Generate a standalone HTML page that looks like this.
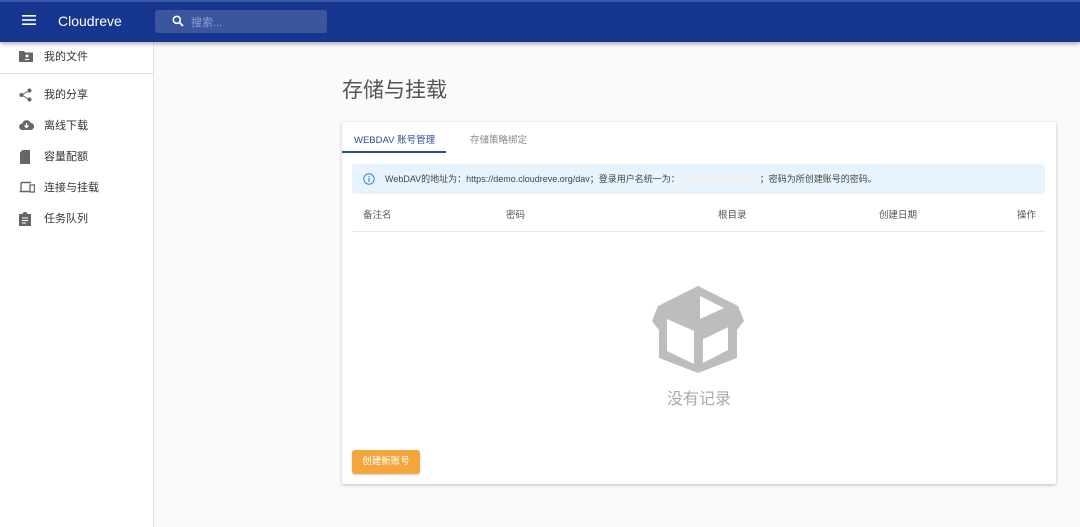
<!DOCTYPE html>
<html><head><meta charset="utf-8"><style>
*{margin:0;padding:0;box-sizing:border-box}
body{width:1080px;height:527px;overflow:hidden;background:#fafafa;font-family:"Liberation Sans","Noto Sans CJK SC",sans-serif;position:relative}
.hdr{position:absolute;left:0;top:0;width:1080px;height:42px;background:#173690;border-top:2px solid #3a56a8;box-shadow:0 2px 4px rgba(0,0,0,.3);z-index:2}
.hdr .t{position:absolute;left:58px;top:11px;color:#fff;font-size:14px}
.srch{position:absolute;left:155px;top:8px;width:172px;height:23px;background:#3c559f;border-radius:3px;color:#8fa0cf;font-size:11px;padding:4px 0 0 36px}
.side{position:absolute;left:0;top:42px;width:154px;height:485px;background:#fff;border-right:1px solid #e4e4e4}
.it{position:absolute;left:0;height:20px;font-size:11px;color:#333;padding-left:44px;line-height:20px}
.it svg{position:absolute;left:19px;top:3px}
.sep{position:absolute;left:0;top:31px;width:154px;height:1px;background:#e0e0e0}
h1{position:absolute;left:342px;top:74px;font-size:21px;font-weight:normal;color:#555}
.card{position:absolute;left:342px;top:122px;width:714px;height:362px;background:#fff;box-shadow:0 1px 3px rgba(0,0,0,.25);border-radius:2px}
.tab{position:absolute;top:10px;font-size:9.5px;color:#888}
.ul{position:absolute;left:0;top:29px;width:104px;height:2px;background:#2b4d9f}
.alert{position:absolute;left:10px;top:42px;width:693px;height:30px;background:#e8f4fd;border-radius:3px;font-size:9px;color:#444;line-height:30px;padding-left:33px}
.alert .blur{display:inline-block;width:80px;height:10px;background:#eef1f4;vertical-align:middle}
.th{position:absolute;top:85px;font-size:9.5px;color:#555}
.hl{position:absolute;left:10px;top:109px;width:693px;height:1px;background:#e6e6e6}
.btn{position:absolute;left:10px;top:328px;width:68px;height:24px;background:#f2a63d;border-radius:3px;color:#fff;font-size:9.5px;text-align:center;line-height:24px;box-shadow:0 1px 2px rgba(0,0,0,.2)}
.empty{position:absolute;left:325px;top:263px;font-size:16px;color:#aaa}
</style></head><body>
<div class="hdr">
<svg style="position:absolute;left:22px;top:12px" width="14" height="12" viewBox="0 0 14 12"><rect y="1" width="14" height="1.6" fill="#fff"/><rect y="5.2" width="14" height="1.6" fill="#fff"/><rect y="9.4" width="14" height="1.6" fill="#fff"/></svg>
<div class="t">Cloudreve</div>
<div class="srch"><svg style="position:absolute;left:17px;top:5px" width="12" height="12" viewBox="0 0 12 12"><circle cx="4.8" cy="4.8" r="3.5" stroke="#fff" stroke-width="1.6" fill="none"/><path d="M7.5 7.5L11 11" stroke="#fff" stroke-width="1.8"/></svg>搜索...</div>
</div>
<div class="side">
<div class="it" style="top:5px"><svg width="14" height="13" viewBox="0 0 14 13"><path d="M0 1h5l1.5 1.5H14V12H0z" fill="#666"/><circle cx="8" cy="6" r="1.5" fill="#fff"/><path d="M5.5 10c0-1.5 5-1.5 5 0z" fill="#fff"/></svg>我的文件</div>
<div class="sep"></div>
<div class="it" style="top:43px"><svg width="13" height="14" viewBox="0 0 13 14"><circle cx="10.5" cy="2.5" r="2" fill="#666"/><circle cx="2.5" cy="7" r="2" fill="#666"/><circle cx="10.5" cy="11.5" r="2" fill="#666"/><path d="M10.5 2.5L2.5 7l8 4.5" stroke="#666" fill="none"/></svg>我的分享</div>
<div class="it" style="top:74px"><svg width="15" height="12" viewBox="0 0 15 12"><path d="M3.5 11a3.2 3.2 0 0 1-.3-6.4A4.5 4.5 0 0 1 11.7 4 3.5 3.5 0 0 1 11.5 11z" fill="#666"/><path d="M7.5 4v4M5.5 6.5l2 2 2-2" stroke="#fff" stroke-width="1.3" fill="none"/></svg>离线下载</div>
<div class="it" style="top:105px"><svg width="12" height="14" viewBox="0 0 12 14"><path d="M3.5 0H11v14H1V2.5z" fill="#666"/></svg>容量配额</div>
<div class="it" style="top:136px"><svg width="16" height="12" viewBox="0 0 16 12"><path d="M2 1.5h10M2 1.5v8M0.5 10.5h10" stroke="#666" stroke-width="1.4" fill="none"/><rect x="11" y="4" width="4.5" height="7" fill="none" stroke="#666" stroke-width="1.3"/></svg>连接与挂载</div>
<div class="it" style="top:167px"><svg width="12" height="14" viewBox="0 0 12 14"><path d="M0 2h3.5a2.5 2 0 0 1 5 0H12v12H0z" fill="#666"/><path d="M3 6h6M3 8.5h6M3 11h4" stroke="#fff" stroke-width="1.1"/></svg>任务队列</div>
</div>
<h1>存储与挂载</h1>
<div class="card">
<div class="tab" style="left:12px;color:#2b4d9f">WEBDAV 账号管理</div>
<div class="tab" style="left:128px">存储策略绑定</div>
<div class="ul"></div>
<div class="alert"><svg style="position:absolute;left:11px;top:9px" width="12" height="12" viewBox="0 0 12 12"><circle cx="6" cy="6" r="5.2" stroke="#3f8ed8" fill="none" stroke-width="1.1"/><path d="M6 5v4M6 3v1" stroke="#3f8ed8" stroke-width="1.2"/></svg>WebDAV的地址为：https://demo.cloudreve.org/dav；登录用户名统一为：<span class="blur"></span>；密码为所创建账号的密码。</div>
<div class="th" style="left:21px">备注名</div>
<div class="th" style="left:164px">密码</div>
<div class="th" style="left:376px">根目录</div>
<div class="th" style="left:537px">创建日期</div>
<div class="th" style="left:675px">操作</div>
<div class="hl"></div>
<svg style="position:absolute;left:310px;top:163px" width="94" height="90" viewBox="653 285 94 90">
<path d="M699 286L739 306L745 321L738 330V358L699 373L660 358V330L653 321L659 306Z" fill="#bdbdbd"/>
<path d="M668 319L695 331V364L668 351Z" fill="#fff"/>
<path d="M701 296L725 308L701 319Z" fill="#fff"/>
<path d="M704 339L729 327V350L704 363Z" fill="#fff"/>
<path d="M705 336L736 321" stroke="#bdbdbd" stroke-width="5"/>
</svg>
<div class="empty">没有记录</div>
<div class="btn">创建新账号</div>
</div>
</body></html>
